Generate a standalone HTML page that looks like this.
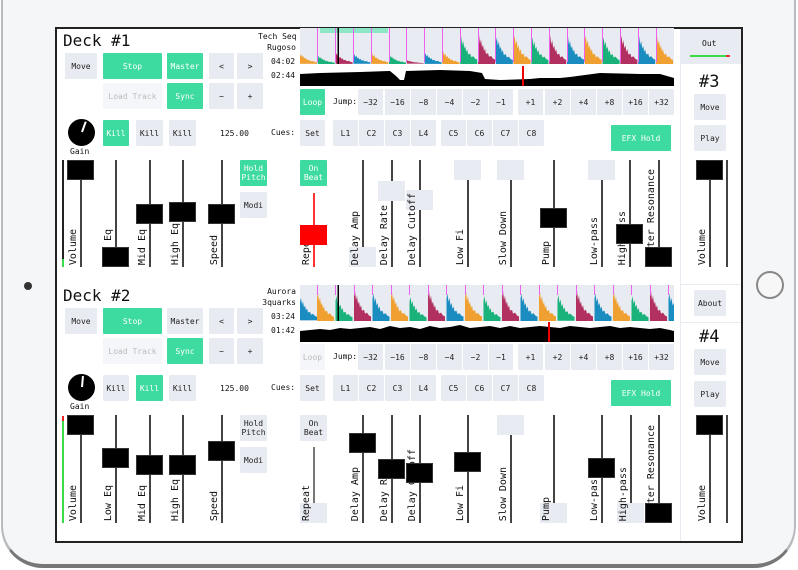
<!DOCTYPE html>
<html><head><meta charset="utf-8"><style>
*{box-sizing:border-box;margin:0;padding:0}
body{width:798px;height:570px;background:#fff;position:relative;overflow:hidden;font-family:"DejaVu Sans Mono","Liberation Mono",monospace;color:#111}
.pad{position:absolute;left:1px;top:-40px;width:795px;height:608px;border:2px solid #b8babe;border-bottom:4px solid #777;border-radius:42px;background:#f5f6f8}
.a{position:absolute}
.scr{position:absolute;left:55px;top:27px;width:688px;height:516px;border:2px solid #222;background:#fff}
.b{position:absolute;height:26px;background:#e8ebf2;font-size:8px;display:flex;align-items:center;justify-content:center;color:#222;border-radius:1px}
.g{background:#3ddb9f;color:#fff}
.lt{background:#f5f6f9;color:#bbb}
.t{position:absolute;font-size:8px;white-space:nowrap}
.s{position:absolute;width:28px;height:107px;overflow:hidden}
.ln{position:absolute;left:13px;top:0;bottom:0;width:2px;background:#444}
.lb{position:absolute;left:2px;bottom:2px;writing-mode:vertical-rl;transform:rotate(180deg);font-size:10px;white-space:nowrap;z-index:2;line-height:10px}
.h{position:absolute;left:0;width:27px;height:20px;background:#000;z-index:3;border:1px solid #333}
.gh{background:#e8ebf2;border:none;z-index:1}
.rh{background:#f00;border:none;z-index:3}
</style></head><body>
<div class="pad"></div>
<div class="a" style="left:24px;top:282px;width:8px;height:8px;border-radius:4px;background:#333"></div>
<div class="a" style="left:756px;top:271px;width:28px;height:28px;border-radius:14px;border:2px solid #888;background:#f7f7f8"></div>
<div class="scr"></div>

<!-- right column -->
<div class="a" style="left:680px;top:29px;width:1px;height:512px;background:#e8ebf2"></div>
<div class="a" style="left:681px;top:29px;width:60px;height:35px;background:#e8ebf2"></div>
<div class="t" style="left:702px;top:39px">Out</div>
<div class="a" style="left:690px;top:55px;width:36px;height:2px;background:#3ddb4a"></div>
<div class="a" style="left:726px;top:55px;width:4px;height:2px;background:#e33"></div>
<div class="t" style="left:699px;top:72px;font-size:17px">#3</div>
<div class="b" style="left:694px;top:94px;width:32px">Move</div>
<div class="b" style="left:694px;top:125px;width:32px">Play</div>
<div class="a" style="left:681px;top:284px;width:60px;height:1px;background:#e8ebf2"></div>
<div class="b" style="left:694px;top:290px;width:32px">About</div>
<div class="a" style="left:681px;top:322px;width:60px;height:1px;background:#e8ebf2"></div>
<div class="t" style="left:699px;top:327px;font-size:17px">#4</div>
<div class="b" style="left:694px;top:349px;width:32px">Move</div>
<div class="b" style="left:694px;top:381px;width:32px">Play</div>
<div class="s" style="left:696px;top:160px"><i class="ln"></i><span class="lb">Volume</span><b class="h" style="top:0"></b></div>
<div class="a" style="left:726px;top:160px;width:2px;height:107px;background:#444"></div>
<div class="s" style="left:696px;top:415px;height:108px"><i class="ln"></i><span class="lb">Volume</span><b class="h" style="top:0"></b></div>
<div class="a" style="left:726px;top:415px;width:2px;height:108px;background:#444"></div>

<svg width="0" height="0" style="position:absolute"><defs>
<path id="sp" d="M0 36V10L1 4L2 14L3 9L4 18L5 15L6 22L7 19L8 25L10 24L11 28L13 27L15 30L17 31V36Z"/>
</defs></svg>

<!-- DECK 1 -->
<div class="a" style="left:0;top:0;width:798px;height:290px">
<div class="t" style="left:63px;top:31px;font-size:16px">Deck #1</div>
<div class="b" style="left:65px;top:53px;width:32px">Move</div>
<div class="b g" style="left:103px;top:53px;width:59px">Stop</div>
<div class="b g" style="left:167px;top:53px;width:36px">Master</div>
<div class="b" style="left:209px;top:53px;width:25px">&lt;</div>
<div class="b" style="left:237px;top:53px;width:26px">&gt;</div>
<div class="b lt" style="left:103px;top:83px;width:59px">Load Track</div>
<div class="b g" style="left:167px;top:83px;width:36px">Sync</div>
<div class="b" style="left:209px;top:83px;width:25px">−</div>
<div class="b" style="left:237px;top:83px;width:26px">+</div>
<div class="a" style="left:68px;top:119px;width:27px;height:27px;border-radius:14px;background:#000"></div>
<div class="a" style="left:81px;top:121px;width:2px;height:11px;background:#fff;transform:rotate(20deg);transform-origin:bottom"></div>
<div class="t" style="left:70px;top:147px">Gain</div>
<div class="b g" style="left:103px;top:120px;width:26px">Kill</div>
<div class="b" style="left:136px;top:120px;width:27px">Kill</div>
<div class="b" style="left:169px;top:120px;width:27px">Kill</div>
<div class="t" style="left:220px;top:129px">125.00</div>
<div class="t" style="left:258px;top:31px;width:38px;text-align:right;line-height:11px">Tech Seq<br>Rugoso</div>
<div class="t" style="left:271px;top:57px">04:02</div>
<div class="t" style="left:271px;top:71px">02:44</div>
<div class="a" style="left:62px;top:160px;width:2px;height:107px;background:#222"></div>
<div class="a" style="left:62px;top:259px;width:2px;height:8px;background:#3ddb4a"></div>
<div class="s" style="left:67px;top:160px"><i class="ln"></i><span class="lb">Volume</span><b class="h" style="top:0"></b></div>
<div class="s" style="left:102px;top:160px"><i class="ln"></i><span class="lb">Low Eq</span><b class="h" style="top:87px"></b></div>
<div class="s" style="left:136px;top:160px"><i class="ln"></i><span class="lb">Mid Eq</span><b class="h" style="top:44px"></b></div>
<div class="s" style="left:169px;top:160px"><i class="ln"></i><span class="lb">High Eq</span><b class="h" style="top:42px"></b></div>
<div class="s" style="left:208px;top:160px"><i class="ln"></i><span class="lb">Speed</span><b class="h" style="top:44px"></b></div>
<div class="b g" style="left:240px;top:160px;width:27px;line-height:9px;text-align:center">Hold<br>Pitch</div>
<div class="b" style="left:240px;top:192px;width:27px">Modi</div>

<svg class="a" style="left:300px;top:28px" width="374" height="36">
<rect width="374" height="36" fill="#e8ebf2"/>
<rect x="20" y="0" width="68" height="5" fill="#8fe6c6"/>
<use href="#sp" fill="#f0a030" transform="translate(0,25) scale(1,0.3)"/>
<use href="#sp" fill="#19b27a" transform="translate(17.8,27) scale(1,0.25)"/>
<use href="#sp" fill="#b23060" transform="translate(35.6,24) scale(1,0.33)"/>
<use href="#sp" fill="#1a8cc0" transform="translate(53.4,25) scale(1,0.3)"/>
<use href="#sp" fill="#f0a030" transform="translate(71.2,24) scale(1,0.33)"/>
<use href="#sp" fill="#19b27a" transform="translate(89,26) scale(1,0.28)"/>
<use href="#sp" fill="#b23060" transform="translate(106.8,32) scale(1,0.1)"/>
<use href="#sp" fill="#1a8cc0" transform="translate(124.6,24) scale(1,0.33)"/>
<use href="#sp" fill="#f0a030" transform="translate(142.4,22) scale(1,0.4)"/>
<use href="#sp" fill="#19b27a" transform="translate(160.2,5) scale(1,0.86)"/>
<use href="#sp" fill="#b23060" transform="translate(178,3) scale(1,0.92)"/>
<use href="#sp" fill="#1a8cc0" transform="translate(195.8,6) scale(1,0.84)"/>
<use href="#sp" fill="#f0a030" transform="translate(213.6,4) scale(1,0.9)"/>
<use href="#sp" fill="#19b27a" transform="translate(231.4,6) scale(1,0.84)"/>
<use href="#sp" fill="#b23060" transform="translate(249.2,4) scale(1,0.9)"/>
<use href="#sp" fill="#1a8cc0" transform="translate(267,5) scale(1,0.86)"/>
<use href="#sp" fill="#f0a030" transform="translate(284.8,4) scale(1,0.9)"/>
<use href="#sp" fill="#19b27a" transform="translate(302.6,6) scale(1,0.84)"/>
<use href="#sp" fill="#b23060" transform="translate(320.4,4) scale(1,0.9)"/>
<use href="#sp" fill="#1a8cc0" transform="translate(338.2,5) scale(1,0.86)"/>
<use href="#sp" fill="#f0a030" transform="translate(356,4) scale(1,0.9)"/>
<path d="M17.5 0V34M35.5 0V34M53.5 0V34M71.5 0V34M89.5 0V34M106.5 0V34M124.5 0V34M142.5 0V34M160.5 0V34M178.5 0V34M195.5 0V34M213.5 0V34M231.5 0V34M249.5 0V34M267.5 0V34M284.5 0V34M302.5 0V34M320.5 0V34M338.5 0V34M356.5 0V34" stroke="#f060f0" stroke-width="1"/>
<rect x="37.5" y="0" width="1.5" height="36" fill="#000"/>
</svg>
<svg class="a" style="left:300px;top:66px" width="374" height="20">
<polygon fill="#000" points="0,20 0,8 20,7 60,6 90,5 96,10 100,14 104,14 106,5 140,4 170,5 182,7 185,13 200,14 230,13 240,12 260,12 270,11 300,7 340,8 360,8 374,12 374,20"/>
<rect x="222" y="0" width="2" height="20" fill="#e00"/>
</svg>
<div class="b g" style="left:300px;top:89px;width:25px">Loop</div>
<div class="t" style="left:333px;top:97px">Jump:</div>
<div class="b" style="left:358px;top:89px;width:25px">−32</div>
<div class="b" style="left:385px;top:89px;width:25px">−16</div>
<div class="b" style="left:411px;top:89px;width:25px">−8</div>
<div class="b" style="left:437px;top:89px;width:25px">−4</div>
<div class="b" style="left:463px;top:89px;width:25px">−2</div>
<div class="b" style="left:489px;top:89px;width:24px">−1</div>
<div class="b" style="left:518px;top:89px;width:25px">+1</div>
<div class="b" style="left:545px;top:89px;width:25px">+2</div>
<div class="b" style="left:571px;top:89px;width:25px">+4</div>
<div class="b" style="left:597px;top:89px;width:25px">+8</div>
<div class="b" style="left:623px;top:89px;width:25px">+16</div>
<div class="b" style="left:649px;top:89px;width:25px">+32</div>
<div class="t" style="left:271px;top:128px">Cues:</div>
<div class="b" style="left:300px;top:120px;width:25px">Set</div>
<div class="b" style="left:333px;top:120px;width:25px">L1</div>
<div class="b" style="left:359px;top:120px;width:25px">C2</div>
<div class="b" style="left:385px;top:120px;width:25px">C3</div>
<div class="b" style="left:411px;top:120px;width:25px">L4</div>
<div class="b" style="left:441px;top:120px;width:25px">C5</div>
<div class="b" style="left:467px;top:120px;width:25px">C6</div>
<div class="b" style="left:493px;top:120px;width:25px">C7</div>
<div class="b" style="left:519px;top:120px;width:25px">C8</div>
<div class="b g" style="left:611px;top:125px;width:60px">EFX Hold</div>
<div class="b g" style="left:300px;top:160px;width:27px;line-height:9px;text-align:center">On<br>Beat</div>
<div class="s" style="left:300px;top:160px"><i class="ln" style="top:33px;background:#f33"></i><span class="lb">Repeat</span><b class="h rh" style="top:65px"></b></div>
<div class="s" style="left:349px;top:160px"><i class="ln"></i><span class="lb">Delay Amp</span><b class="h gh" style="top:87px"></b></div>
<div class="s" style="left:378px;top:160px"><i class="ln"></i><span class="lb">Delay Rate</span><b class="h gh" style="top:21px"></b></div>
<div class="s" style="left:406px;top:160px"><i class="ln"></i><span class="lb">Delay Cutoff</span><b class="h gh" style="top:30px"></b></div>
<div class="s" style="left:454px;top:160px"><i class="ln"></i><span class="lb">Low Fi</span><b class="h gh" style="top:0"></b></div>
<div class="s" style="left:497px;top:160px"><i class="ln"></i><span class="lb">Slow Down</span><b class="h gh" style="top:0"></b></div>
<div class="s" style="left:540px;top:160px"><i class="ln"></i><span class="lb">Pump</span><b class="h" style="top:48px"></b></div>
<div class="s" style="left:588px;top:160px"><i class="ln"></i><span class="lb">Low-pass</span><b class="h gh" style="top:0"></b></div>
<div class="s" style="left:616px;top:160px"><i class="ln"></i><span class="lb">High-pass</span><b class="h" style="top:64px"></b></div>
<div class="s" style="left:645px;top:160px"><i class="ln"></i><span class="lb">Filter Resonance</span><b class="h" style="top:87px"></b></div>
</div>

<!-- DECK 2 -->
<div class="a" style="left:0;top:255px;width:798px;height:290px">
<div class="t" style="left:63px;top:31px;font-size:16px">Deck #2</div>
<div class="b" style="left:65px;top:53px;width:32px">Move</div>
<div class="b g" style="left:103px;top:53px;width:59px">Stop</div>
<div class="b" style="left:167px;top:53px;width:36px">Master</div>
<div class="b" style="left:209px;top:53px;width:25px">&lt;</div>
<div class="b" style="left:237px;top:53px;width:26px">&gt;</div>
<div class="b lt" style="left:103px;top:83px;width:59px">Load Track</div>
<div class="b g" style="left:167px;top:83px;width:36px">Sync</div>
<div class="b" style="left:209px;top:83px;width:25px">−</div>
<div class="b" style="left:237px;top:83px;width:26px">+</div>
<div class="a" style="left:68px;top:119px;width:27px;height:27px;border-radius:14px;background:#000"></div>
<div class="a" style="left:81px;top:121px;width:2px;height:11px;background:#fff;transform:rotate(5deg);transform-origin:bottom"></div>
<div class="t" style="left:70px;top:147px">Gain</div>
<div class="b" style="left:103px;top:120px;width:26px">Kill</div>
<div class="b g" style="left:136px;top:120px;width:27px">Kill</div>
<div class="b" style="left:169px;top:120px;width:27px">Kill</div>
<div class="t" style="left:220px;top:129px">125.00</div>
<div class="t" style="left:258px;top:31px;width:38px;text-align:right;line-height:11px">Aurora<br>3quarks</div>
<div class="t" style="left:271px;top:57px">03:24</div>
<div class="t" style="left:271px;top:71px">01:42</div>
<div class="a" style="left:62px;top:161px;width:2px;height:107px;background:#3ddb4a"></div>
<div class="a" style="left:62px;top:161px;width:2px;height:5px;background:#e22"></div>
<div class="s" style="left:67px;top:160px;height:108px"><i class="ln"></i><span class="lb">Volume</span><b class="h" style="top:0"></b></div>
<div class="s" style="left:102px;top:160px;height:108px"><i class="ln"></i><span class="lb">Low Eq</span><b class="h" style="top:33px"></b></div>
<div class="s" style="left:136px;top:160px;height:108px"><i class="ln"></i><span class="lb">Mid Eq</span><b class="h" style="top:40px"></b></div>
<div class="s" style="left:169px;top:160px;height:108px"><i class="ln"></i><span class="lb">High Eq</span><b class="h" style="top:40px"></b></div>
<div class="s" style="left:208px;top:160px;height:108px"><i class="ln"></i><span class="lb">Speed</span><b class="h" style="top:26px"></b></div>
<div class="b" style="left:240px;top:160px;width:27px;line-height:9px;text-align:center">Hold<br>Pitch</div>
<div class="b" style="left:240px;top:192px;width:27px">Modi</div>

<svg class="a" style="left:300px;top:30px" width="374" height="36">
<rect width="374" height="36" fill="#e8ebf2"/>
<use href="#sp" fill="#1a8cc0" transform="translate(0,10) scale(1,0.7)"/>
<use href="#sp" fill="#f0a030" transform="translate(17,4) scale(1,0.9)"/>
<use href="#sp" fill="#19b27a" transform="translate(35.5,8) scale(1,0.78)"/>
<use href="#sp" fill="#b23060" transform="translate(54,2) scale(1,0.95)"/>
<use href="#sp" fill="#1a8cc0" transform="translate(72.5,5) scale(1,0.86)"/>
<use href="#sp" fill="#f0a030" transform="translate(91,3) scale(1,0.92)"/>
<use href="#sp" fill="#19b27a" transform="translate(109.5,9) scale(1,0.75)"/>
<use href="#sp" fill="#b23060" transform="translate(128,2) scale(1,0.95)"/>
<use href="#sp" fill="#1a8cc0" transform="translate(146.5,5) scale(1,0.86)"/>
<use href="#sp" fill="#f0a030" transform="translate(165,3) scale(1,0.92)"/>
<use href="#sp" fill="#19b27a" transform="translate(183.5,8) scale(1,0.78)"/>
<use href="#sp" fill="#b23060" transform="translate(202,2) scale(1,0.95)"/>
<use href="#sp" fill="#1a8cc0" transform="translate(220.5,5) scale(1,0.86)"/>
<use href="#sp" fill="#f0a030" transform="translate(239,3) scale(1,0.92)"/>
<use href="#sp" fill="#19b27a" transform="translate(257.5,7) scale(1,0.8)"/>
<use href="#sp" fill="#b23060" transform="translate(276,2) scale(1,0.95)"/>
<use href="#sp" fill="#1a8cc0" transform="translate(294.5,5) scale(1,0.86)"/>
<use href="#sp" fill="#f0a030" transform="translate(313,3) scale(1,0.92)"/>
<use href="#sp" fill="#19b27a" transform="translate(331.5,8) scale(1,0.78)"/>
<use href="#sp" fill="#b23060" transform="translate(350,2) scale(1,0.95)"/>
<use href="#sp" fill="#1a8cc0" transform="translate(368.5,5) scale(1,0.86)"/>
<path d="M17.5 0V10M35.5 0V10M54.5 0V10M72.5 0V10M91.5 0V10M109.5 0V10M128.5 0V10M146.5 0V10M165.5 0V10M183.5 0V10M202.5 0V10M220.5 0V10M239.5 0V10M257.5 0V10M276.5 0V10M294.5 0V10M313.5 0V10M331.5 0V10M350.5 0V10M368.5 0V10" stroke="#f060f0" stroke-width="1"/>
<rect x="37.5" y="0" width="1.5" height="36" fill="#000"/>
</svg>
<svg class="a" style="left:300px;top:67px" width="374" height="20">
<polygon fill="#000" points="0,20 0,9 10,8 20,7 30,8 40,6 50,7 60,6 70,5 80,7 90,4 100,6 110,5 120,7 130,4 140,6 150,5 160,3 170,6 180,5 190,4 200,6 210,4 220,6 230,5 240,4 250,5 260,6 270,4 280,5 290,6 300,5 310,4 320,6 330,5 340,6 350,7 360,6 370,8 374,9 374,20"/>
<rect x="248" y="0" width="2" height="20" fill="#e00"/>
</svg>
<div class="b lt" style="left:300px;top:89px;width:25px">Loop</div>
<div class="t" style="left:333px;top:97px">Jump:</div>
<div class="b" style="left:358px;top:89px;width:25px">−32</div>
<div class="b" style="left:385px;top:89px;width:25px">−16</div>
<div class="b" style="left:411px;top:89px;width:25px">−8</div>
<div class="b" style="left:437px;top:89px;width:25px">−4</div>
<div class="b" style="left:463px;top:89px;width:25px">−2</div>
<div class="b" style="left:489px;top:89px;width:24px">−1</div>
<div class="b" style="left:518px;top:89px;width:25px">+1</div>
<div class="b" style="left:545px;top:89px;width:25px">+2</div>
<div class="b" style="left:571px;top:89px;width:25px">+4</div>
<div class="b" style="left:597px;top:89px;width:25px">+8</div>
<div class="b" style="left:623px;top:89px;width:25px">+16</div>
<div class="b" style="left:649px;top:89px;width:25px">+32</div>
<div class="t" style="left:271px;top:128px">Cues:</div>
<div class="b" style="left:300px;top:120px;width:25px">Set</div>
<div class="b" style="left:333px;top:120px;width:25px">L1</div>
<div class="b" style="left:359px;top:120px;width:25px">C2</div>
<div class="b" style="left:385px;top:120px;width:25px">C3</div>
<div class="b" style="left:411px;top:120px;width:25px">L4</div>
<div class="b" style="left:441px;top:120px;width:25px">C5</div>
<div class="b" style="left:467px;top:120px;width:25px">C6</div>
<div class="b" style="left:493px;top:120px;width:25px">C7</div>
<div class="b" style="left:519px;top:120px;width:25px">C8</div>
<div class="b g" style="left:611px;top:125px;width:60px">EFX Hold</div>
<div class="b" style="left:300px;top:160px;width:27px;line-height:9px;text-align:center">On<br>Beat</div>
<div class="s" style="left:300px;top:160px;height:108px"><i class="ln" style="top:32px;bottom:20px;background:#777"></i><span class="lb">Repeat</span><b class="h gh" style="top:88px"></b></div>
<div class="s" style="left:349px;top:160px;height:108px"><i class="ln"></i><span class="lb">Delay Amp</span><b class="h" style="top:18px"></b></div>
<div class="s" style="left:378px;top:160px;height:108px"><i class="ln"></i><span class="lb">Delay Rate</span><b class="h" style="top:44px"></b></div>
<div class="s" style="left:406px;top:160px;height:108px"><i class="ln"></i><span class="lb">Delay Cutoff</span><b class="h" style="top:48px"></b></div>
<div class="s" style="left:454px;top:160px;height:108px"><i class="ln"></i><span class="lb">Low Fi</span><b class="h" style="top:37px"></b></div>
<div class="s" style="left:497px;top:160px;height:108px"><i class="ln"></i><span class="lb">Slow Down</span><b class="h gh" style="top:0"></b></div>
<div class="s" style="left:540px;top:160px;height:108px"><i class="ln"></i><span class="lb">Pump</span><b class="h gh" style="top:88px"></b></div>
<div class="s" style="left:588px;top:160px;height:108px"><i class="ln"></i><span class="lb">Low-pass</span><b class="h" style="top:43px"></b></div>
<div class="s" style="left:617px;top:160px;height:108px"><i class="ln"></i><span class="lb">High-pass</span><b class="h gh" style="top:88px"></b></div>
<div class="s" style="left:645px;top:160px;height:108px"><i class="ln"></i><span class="lb">Filter Resonance</span><b class="h" style="top:88px"></b></div>
</div>
</body></html>
